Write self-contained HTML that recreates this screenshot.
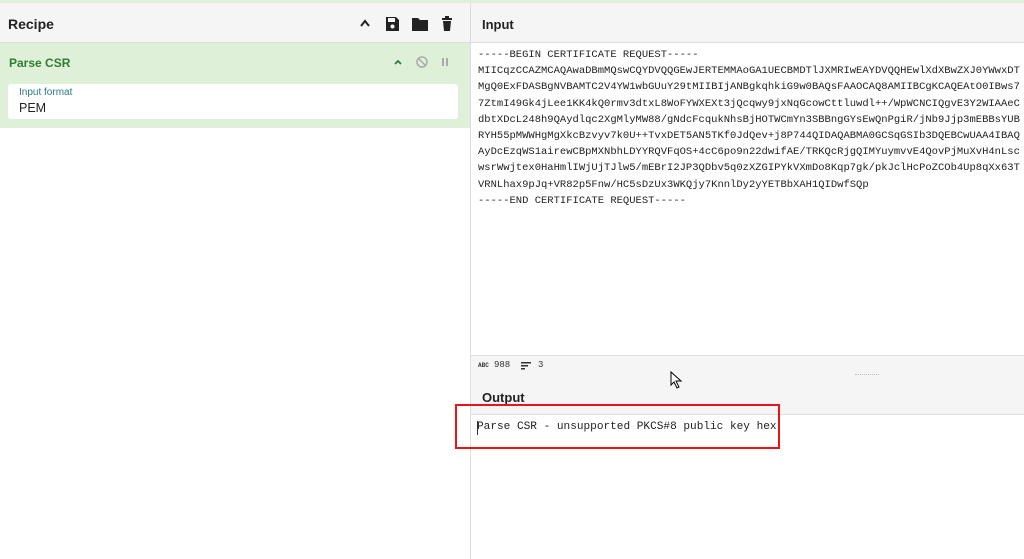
<!DOCTYPE html>
<html><head><style>
*{margin:0;padding:0;box-sizing:border-box}
body{width:1024px;height:559px;overflow:hidden;background:#fff;font-family:"Liberation Sans",sans-serif;position:relative}
.abs{position:absolute}
.mono{font-family:"Liberation Mono",monospace}
</style></head><body>
<div class="abs" style="left:0;top:0;width:1024px;height:3px;background:#dff0d8"></div>
<!-- recipe -->
<div class="abs" style="left:0;top:3px;width:470px;height:40px;background:#f5f5f5;border-bottom:1px solid #ddd"></div>
<div class="abs" style="left:8px;top:16px;font-size:14px;font-weight:bold;color:#222">Recipe</div>
<svg class="abs" style="left:358px;top:16px" width="100" height="16">
<path d="M3 10 L7 5 L11 10" stroke="#222" stroke-width="2" fill="none"/>
<path d="M28 1 h10 l3 3 v11 h-13z" fill="#222"/><rect x="30" y="2" width="7" height="4" fill="#f5f5f5"/><circle cx="34.5" cy="10.5" r="2" fill="#f5f5f5"/>
<path d="M54 2 h6 l2 2 h8 v11 h-16z" fill="#222"/>
<rect x="84" y="2" width="10" height="2" fill="#222"/><rect x="87" y="0" width="4" height="2" fill="#222"/><path d="M85 5 h8 l-1 10 h-6z" fill="#222"/>
</svg>
<div class="abs" style="left:0;top:43px;width:470px;height:85px;background:#dff0d8"></div>
<div class="abs" style="left:9px;top:56px;font-size:12px;font-weight:bold;color:#2e7d32">Parse CSR</div>
<svg class="abs" style="left:392px;top:55px" width="60" height="14">
<path d="M3 9 L6 6 L9 9" stroke="#2e7d32" stroke-width="1.8" fill="none"/>
<circle cx="30" cy="7" r="5" stroke="#aaa" stroke-width="1.5" fill="none"/><path d="M26.5 3.5 L33.5 10.5" stroke="#aaa" stroke-width="1.5"/>
<rect x="50" y="3" width="2" height="8" fill="#aaa"/><rect x="54" y="3" width="2" height="8" fill="#aaa"/>
</svg>
<div class="abs" style="left:8px;top:84px;width:450px;height:35px;background:#fff;border-radius:3px"></div>
<div class="abs" style="left:19px;top:87px;font-size:10px;color:#2a7a8a">Input format</div>
<div class="abs" style="left:19px;top:101px;font-size:12.5px;color:#222">PEM</div>
<div class="abs" style="left:470px;top:3px;width:1px;height:556px;background:#ddd"></div>
<!-- input -->
<div class="abs" style="left:471px;top:3px;width:553px;height:40px;background:#f5f5f5;border-bottom:1px solid #ddd"></div>
<div class="abs" style="left:482px;top:17px;font-size:13px;font-weight:bold;color:#222">Input</div>
<pre class="abs mono" style="left:478px;top:47px;font-size:10.5px;line-height:16.2px;color:#222;white-space:pre">-----BEGIN CERTIFICATE REQUEST-----
MIICqzCCAZMCAQAwaDBmMQswCQYDVQQGEwJERTEMMAoGA1UECBMDTlJXMRIwEAYDVQQHEwlXdXBwZXJ0YWwxDT
MgQ0ExFDASBgNVBAMTC2V4YW1wbGUuY29tMIIBIjANBgkqhkiG9w0BAQsFAAOCAQ8AMIIBCgKCAQEAtO0IBws7
7ZtmI49Gk4jLee1KK4kQ0rmv3dtxL8WoFYWXEXt3jQcqwy9jxNqGcowCttluwdl++/WpWCNCIQgvE3Y2WIAAeC
dbtXDcL248h9QAydlqc2XgMlyMW88/gNdcFcqukNhsBjHOTWCmYn3SBBngGYsEwQnPgiR/jNb9Jjp3mEBBsYUB
RYH55pMWWHgMgXkcBzvyv7k0U++TvxDET5AN5TKf0JdQev+j8P744QIDAQABMA0GCSqGSIb3DQEBCwUAA4IBAQ
AyDcEzqWS1airewCBpMXNbhLDYYRQVFqOS+4cC6po9n22dwifAE/TRKQcRjgQIMYuymvvE4QovPjMuXvH4nLsc
wsrWwjtex0HaHmlIWjUjTJlw5/mEBrI2JP3QDbv5q0zXZGIPYkVXmDo8Kqp7gk/pkJclHcPoZCOb4Up8qXx63T
VRNLhax9pJq+VR82p5Fnw/HC5sDzUx3WKQjy7KnnlDy2yYETBbXAH1QIDwfSQp
-----END CERTIFICATE REQUEST-----</pre>
<div class="abs" style="left:471px;top:355px;width:553px;height:1px;background:#ddd"></div>
<div class="abs" style="left:471px;top:356px;width:553px;height:19px;background:#f5f5f5"></div>
<div class="abs mono" style="left:478px;top:362px;font-size:6px;font-weight:bold;color:#333">ABC</div>
<div class="abs mono" style="left:494px;top:360px;font-size:9px;color:#333">988</div>
<svg class="abs" style="left:521px;top:362px" width="12" height="8"><rect x="0" y="0" width="10" height="1.5" fill="#333"/><rect x="0" y="3" width="7" height="1.5" fill="#333"/><rect x="0" y="6" width="4" height="1.5" fill="#333"/></svg>
<div class="abs mono" style="left:538px;top:360px;font-size:9px;color:#333">3</div>
<div class="abs" style="left:855px;top:374px;width:24px;height:1px;border-top:1px dotted #bbb"></div>
<!-- output -->
<div class="abs" style="left:471px;top:375px;width:553px;height:40px;background:#f5f5f5;border-bottom:1px solid #ddd"></div>
<div class="abs" style="left:482px;top:390px;font-size:13px;font-weight:bold;color:#222">Output</div>
<svg class="abs" style="left:670px;top:371px" width="14" height="18"><path d="M1 1 L1 14 L4 11 L7 17 L9 16 L6 10 L11 10 Z" fill="#fff" stroke="#000" stroke-width="1"/></svg>
<div class="abs" style="left:477px;top:421px;width:1px;height:14px;background:#333"></div>
<div class="abs mono" style="left:477px;top:421px;font-size:11.1px;color:#222;white-space:pre">Parse CSR - unsupported PKCS#8 public key hex</div>
<div class="abs" style="left:455px;top:404px;width:325px;height:45px;border:2px solid #e8141c"></div>
</body></html>
